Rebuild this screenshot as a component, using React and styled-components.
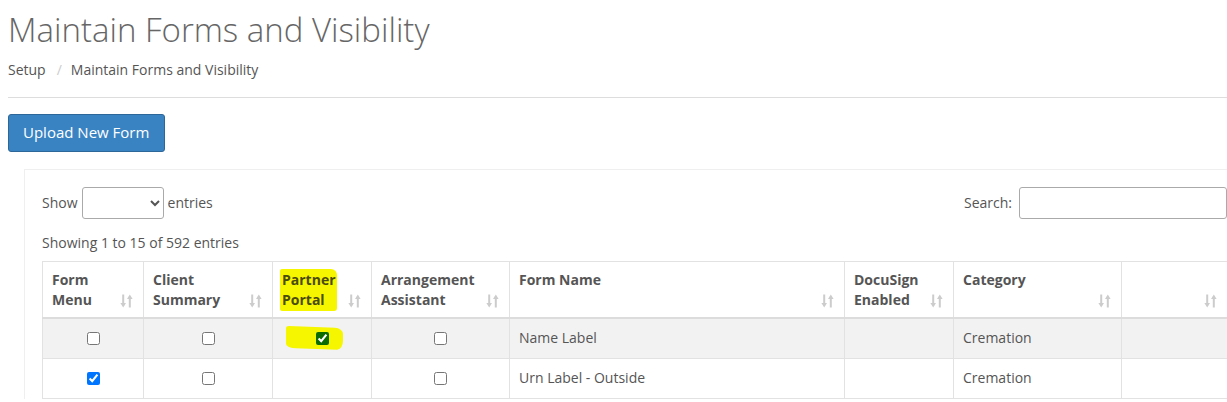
import React from "react";
import styled, { createGlobalStyle } from "styled-components";

const Global = createGlobalStyle`
  html, body { margin: 0; padding: 0; background: #fff; overflow: hidden; }
  body { font-family: "Open Sans", "Liberation Sans", sans-serif; font-size: 14px; color: #555; }
  * { box-sizing: border-box; }
`;

const Page = styled.div`
  width: 1262px;
  padding: 12px 8px 0 8px;
`;

const Title = styled.h1`
  margin: 0;
  font-size: 33px;
  line-height: 36px;
  font-weight: 300;
  color: #666;
`;

const Crumbs = styled.ol`
  list-style: none;
  margin: 12px 0 0 0;
  padding: 0;
  display: flex;
  line-height: 20px;
  font-size: 14px;
  color: #555;
`;

const Sep = styled.li`
  color: #ccc;
  padding: 0 9px 0 11px;
`;

const Rule = styled.hr`
  margin: 17px 0 16px 0;
  border: 0;
  border-top: 1px solid #ddd;
`;

const PrimaryButton = styled.button`
  font-family: inherit;
  font-size: 15px;
  line-height: 21px;
  color: #fff;
  background: #3a83c3;
  border: 1px solid #2d6698;
  border-radius: 3px;
  padding: 7px 15px 8px 14px;
  cursor: pointer;
`;

const Card = styled.div`
  margin: 17px 0 0 16px;
  width: 1221px;
  border: 1px solid #efefef;
  border-bottom: 0;
  padding: 17px 17px 0 16px;
`;

const Controls = styled.div`
  display: flex;
  justify-content: space-between;
  align-items: center;
  height: 32px;
  padding-left: 1px;
`;

const Field = styled.label`
  display: flex;
  align-items: center;
  gap: ${(p) => p.$gap}px;
  line-height: 20px;
`;

const Select = styled.select`
  width: 82px;
  height: 32px;
  border: 1px solid #aaa;
  border-radius: 3px;
  background: #fff;
  font-family: inherit;
  font-size: 14px;
  color: #555;
`;

const SearchInput = styled.input`
  width: 208px;
  height: 32px;
  border: 1px solid #aaa;
  border-radius: 3px;
  background: #fff;
  font-family: inherit;
`;

const Info = styled.div`
  margin-top: 14px;
  line-height: 20px;
  padding-left: 1px;
`;

const Table = styled.table`
  margin: 8px 0 0 1px;
  width: 1185px;
  table-layout: fixed;
  border-collapse: collapse;
  border: 1px solid #e2e2e2;
`;

const Th = styled.th`
  position: relative;
  text-align: left;
  vertical-align: top;
  font-weight: 700;
  color: #555;
  line-height: 20px;
  padding: 8px 26px 7px 9px;
  border-left: 1px solid #e2e2e2;
  border-bottom: 2px solid #dcdcdc;
`;

const Row = styled.tr`
  background: ${(p) => (p.$striped ? "#f2f2f2" : "#fff")};
`;

const Td = styled.td`
  position: relative;
  padding: 8px 9px 10px 9px;
  line-height: 21px;
  border-left: 1px solid #e2e2e2;
  border-top: 1px solid #e2e2e2;
  text-align: ${(p) => (p.$center ? "center" : "left")};
  vertical-align: middle;
  color: #555;
`;

const Check = styled.input`
  position: relative;
  z-index: 1;
  width: 13px;
  height: 13px;
  margin: 0;
  vertical-align: -2px;
  accent-color: ${(p) => p.$accent || "#0075ff"};
`;

const Marker = styled.span`
  display: inline-block;
  background: #f6f600;
  color: #4a4a0c;
  padding: 1px 1px 1px 2px;
  margin: -1px -2px -2px -2px;
  border-radius: 2px 6px 3px 2px;
`;

const MarkerBlob = styled.span`
  position: absolute;
  left: 13px;
  top: 8px;
  width: 57px;
  height: 22px;
  background: #f6f600;
  border-radius: 3px 8px 6px 10px / 2px 6px 9px 4px;
  transform: skewY(2deg);
`;

const SortWrap = styled.span`
  position: absolute;
  right: 10px;
  bottom: 9px;
  width: 13px;
  height: 14px;
  display: flex;
`;

const SortIcon = () => (
  <SortWrap>
    <svg width="13" height="14" viewBox="0 0 13 14" fill="none">
      <path d="M3.2 0.5V11.5" stroke="#cccccc" strokeWidth="2" />
      <path d="M0.4 9L3.2 13.4L6 9Z" fill="#cccccc" />
      <path d="M9.8 13.5V2.5" stroke="#cccccc" strokeWidth="2" />
      <path d="M7 5L9.8 0.6L12.6 5Z" fill="#cccccc" />
    </svg>
  </SortWrap>
);

const widths = [101, 129, 99, 138, 335, 109, 168, 106];

const headers = [
  ["Form", "Menu"],
  ["Client", "Summary"],
  null,
  ["Arrangement", "Assistant"],
  ["Form Name"],
  ["DocuSign", "Enabled"],
  ["Category"],
  [],
];

const rows = [
  { menu: false, summary: false, partner: true, assistant: false, name: "Name Label", category: "Cremation" },
  { menu: true, summary: false, partner: null, assistant: false, name: "Urn Label - Outside", category: "Cremation" },
];

export default function App() {
  return (
    <>
      <Global />
      <Page>
        <Title>Maintain Forms and Visibility</Title>
        <Crumbs>
          <li>Setup</li>
          <Sep>/</Sep>
          <li>Maintain Forms and Visibility</li>
        </Crumbs>
        <Rule />
        <PrimaryButton>Upload New Form</PrimaryButton>
        <Card>
          <Controls>
            <Field $gap={4}>
              Show
              <Select defaultValue="">
                <option value=""></option>
                <option value="15">15</option>
              </Select>
              entries
            </Field>
            <Field $gap={7}>
              Search:
              <SearchInput type="search" />
            </Field>
          </Controls>
          <Info>Showing 1 to 15 of 592 entries</Info>
          <Table>
            <colgroup>
              {widths.map((w, i) => (
                <col key={i} style={{ width: w }} />
              ))}
            </colgroup>
            <thead>
              <tr>
                {headers.map((h, i) => (
                  <Th key={i}>
                    {h === null ? (
                      <Marker>
                        Partner
                        <br />
                        Portal
                      </Marker>
                    ) : (
                      h.map((line, j) => (
                        <React.Fragment key={j}>
                          {j > 0 && <br />}
                          {line}
                        </React.Fragment>
                      ))
                    )}
                    <SortIcon />
                  </Th>
                ))}
              </tr>
            </thead>
            <tbody>
              {rows.map((r, i) => (
                <Row key={i} $striped={i === 0}>
                  <Td $center>
                    <Check type="checkbox" defaultChecked={r.menu} />
                  </Td>
                  <Td $center>
                    <Check type="checkbox" defaultChecked={r.summary} />
                  </Td>
                  <Td $center>
                    {r.partner !== null && (
                      <>
                        <MarkerBlob />
                        <Check type="checkbox" defaultChecked={r.partner} $accent="#0b6a00" />
                      </>
                    )}
                  </Td>
                  <Td $center>
                    <Check type="checkbox" defaultChecked={r.assistant} />
                  </Td>
                  <Td>{r.name}</Td>
                  <Td></Td>
                  <Td>{r.category}</Td>
                  <Td></Td>
                </Row>
              ))}
            </tbody>
          </Table>
        </Card>
      </Page>
    </>
  );
}
